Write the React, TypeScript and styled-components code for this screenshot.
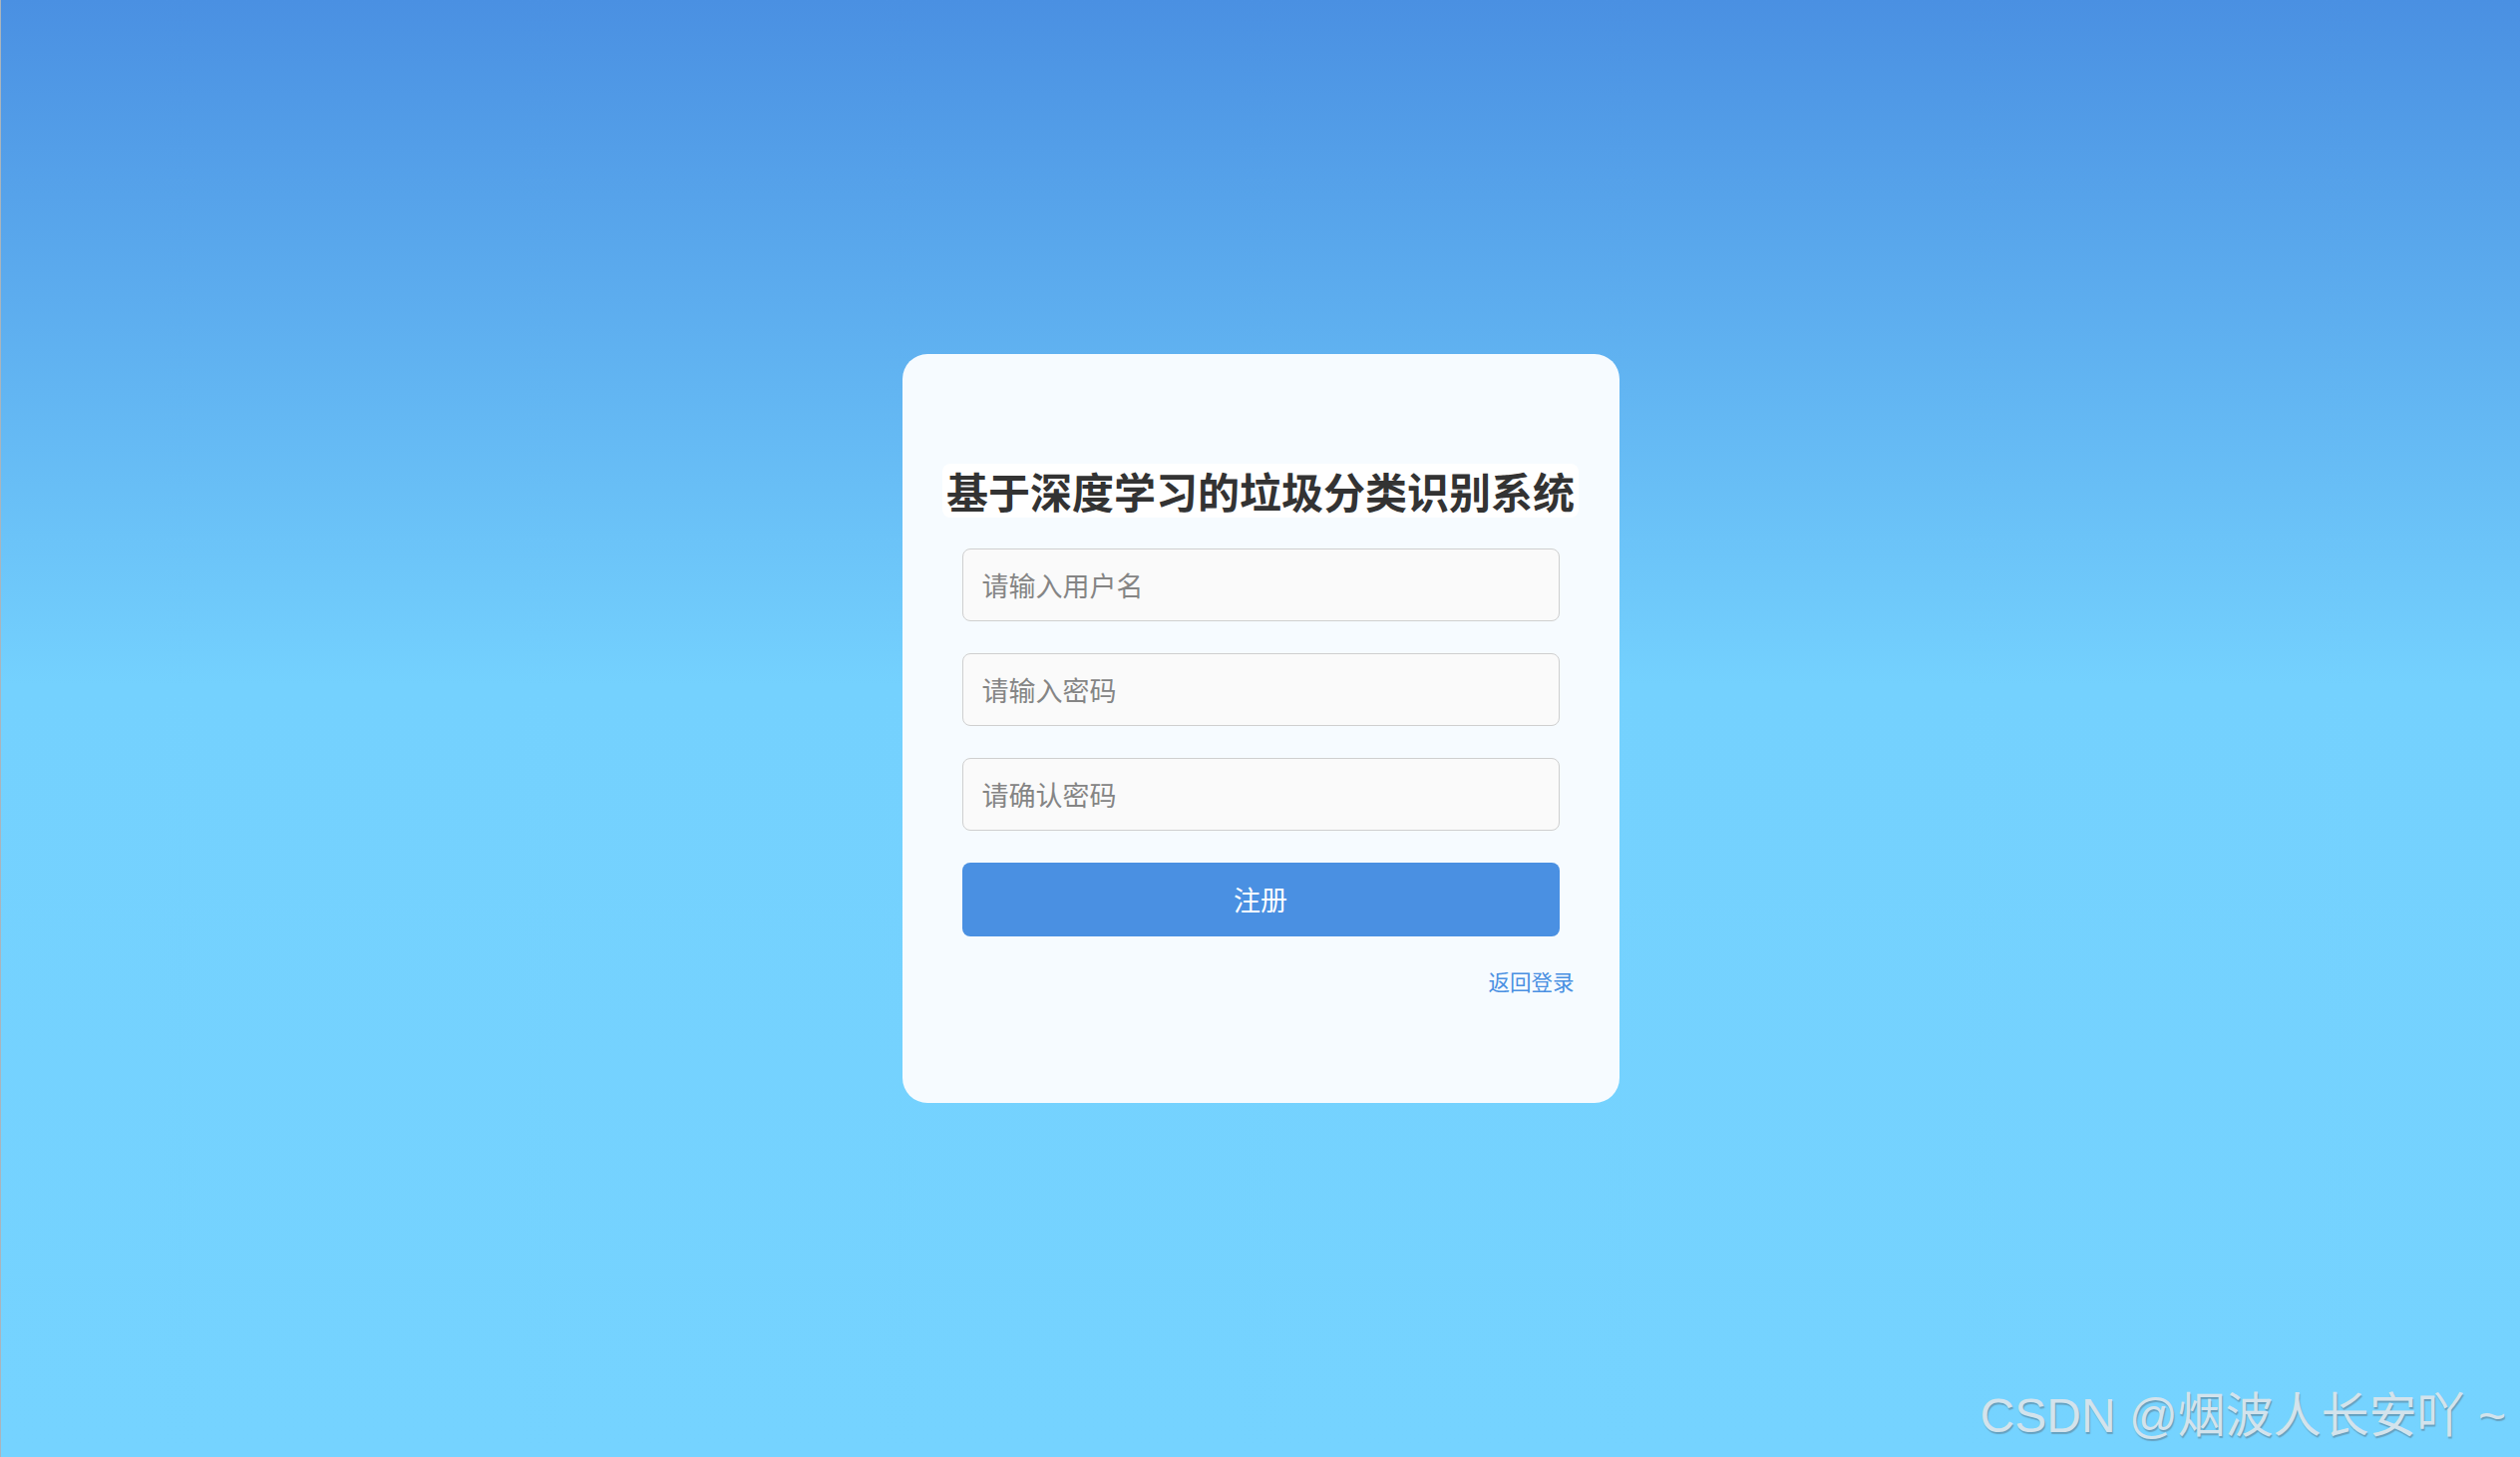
import React from 'react';
import styled, { createGlobalStyle } from 'styled-components';

const GlobalStyle = createGlobalStyle`
    html, body {
        margin: 0;
        padding: 0;
    }
    body {
        font-family: "Noto Sans CJK SC", "Liberation Sans", sans-serif;
    }
    * {
        box-sizing: border-box;
    }
`;

const Page = styled.div`
    position: relative;
    width: 100vw;
    height: 100vh;
    display: flex;
    align-items: center;
    justify-content: center;
    background: linear-gradient(180deg, #4a90e2 0%, #74d1fe 47%, #75d3ff 100%);
    border-left: 1px solid #a9b4bd;
    overflow: hidden;
`;

const Card = styled.div`
    width: 719px;
    height: 751px;
    padding: 110px 45px 0;
    background: #f6fbff;
    border-radius: 25px;
    display: flex;
    flex-direction: column;
    align-items: center;
`;

const Title = styled.h2`
    margin: 0 0 31px;
    padding: 0 4px;
    font-size: 42px;
    line-height: 54px;
    font-weight: 700;
    color: #333;
    background: #ffffff;
    border-radius: 8px;
    white-space: nowrap;
`;

const Form = styled.form`
    width: 100%;
    display: flex;
    flex-direction: column;
    align-items: center;
    gap: 32px;
`;

const Input = styled.input`
    width: 599px;
    height: 73px;
    padding: 0 19px;
    border: 1.6px solid #cfcfcf;
    border-radius: 8px;
    background: #fafafa;
    font-family: "Noto Sans CJK SC", sans-serif;
    font-size: 27px;
    color: #333;
    outline: none;
    &::placeholder {
        color: #858585;
    }
`;

const Button = styled.button`
    width: 599px;
    height: 73.5px;
    border: none;
    border-radius: 8px;
    background: #4a90e2;
    color: #ffffff;
    font-family: "Noto Sans CJK SC", sans-serif;
    font-size: 27px;
    cursor: pointer;
`;

const LinkRow = styled.div`
    width: 100%;
    margin-top: 30px;
    display: flex;
    justify-content: flex-end;
`;

const BackLink = styled.a`
    font-size: 21.5px;
    line-height: 30px;
    color: #4a90e2;
    text-decoration: none;
    cursor: pointer;
`;

const Watermark = styled.div`
    position: absolute;
    right: 14px;
    bottom: 12px;
    font-family: "Liberation Sans", "Noto Sans CJK SC", sans-serif;
    font-size: 48px;
    line-height: 58px;
    color: #d3e3ec;
    text-shadow: 1px 2px 1px rgba(90, 120, 140, 0.55);
    white-space: nowrap;
    pointer-events: none;
`;

export default function App() {
    return (
        <>
            <GlobalStyle />
            <Page>
                <Card>
                    <Title>基于深度学习的垃圾分类识别系统</Title>
                    <Form onSubmit={e => e.preventDefault()}>
                        <Input type="text" placeholder="请输入用户名" />
                        <Input type="password" placeholder="请输入密码" />
                        <Input type="password" placeholder="请确认密码" />
                        <Button type="submit">注册</Button>
                    </Form>
                    <LinkRow>
                        <BackLink>返回登录</BackLink>
                    </LinkRow>
                </Card>
                <Watermark>CSDN @烟波人长安吖 ~</Watermark>
            </Page>
        </>
    );
}
